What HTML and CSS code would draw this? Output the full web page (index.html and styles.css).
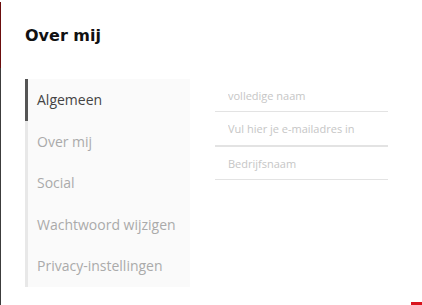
FILE: index.html
```html
<!DOCTYPE html>
<html lang="nl">
<head>
  <meta charset="UTF-8">
  <meta name="viewport" content="width=device-width, initial-scale=1.0">
  <title>Over mij</title>
  <link rel="stylesheet" href="styles.css">
</head>
<body>
  <div class="edge"></div>
  <div class="modal">
    <h1>Over mij</h1>
    <div class="content">
      <ul class="tabs">
        <li class="active">Algemeen</li>
        <li>Over mij</li>
        <li>Social</li>
        <li>Wachtwoord wijzigen</li>
        <li>Privacy-instellingen</li>
      </ul>
      <form class="fields">
        <input type="text" placeholder="volledige naam">
        <input type="email" class="focus" placeholder="Vul hier je e-mailadres in">
        <input type="text" placeholder="Bedrijfsnaam">
      </form>
    </div>
  </div>
  <div class="peek"></div>
</body>
</html>
```

FILE: styles.css
```css
html, body {
  height: 100%;
}
body {
  margin: 0;
  display: flex;
  background-color: #fff;
  font-family: "Open Sans", sans-serif;
  overflow: hidden;
}
.edge {
  width: 1px;
  flex: none;
  background: linear-gradient(to bottom, #fff 0, #fff 2px, #6b0d0d 2px, #6b0d0d 68px, #3c3c3c 68px);
}
.modal {
  flex: 1;
  padding: 0 24px;
}
h1 {
  margin: 26px 0 0;
  height: 53px;
  font-family: "DejaVu Sans", sans-serif;
  font-size: 16px;
  font-weight: bold;
  line-height: 19px;
  color: #111;
}
.content {
  display: flex;
  gap: 25px;
}
.tabs {
  list-style: none;
  margin: 0;
  padding: 0;
  width: 165px;
  background-color: #fafafa;
}
.tabs li {
  height: 41.6px;
  line-height: 41.6px;
  padding-left: 9px;
  border-left: 3px solid #e8e8e8;
  font-size: 14px;
  color: #aaa;
}
.tabs li.active {
  border-left-color: #555;
  color: #444;
}
.fields {
  width: 173px;
  display: flex;
  flex-direction: column;
}
.fields input {
  display: block;
  box-sizing: border-box;
  width: 100%;
  height: 33px;
  margin: 0;
  padding: 0 0 0 13px;
  border: none;
  border-bottom: 1px solid #e3e3e3;
  background: transparent;
  font-family: "Open Sans", sans-serif;
  font-size: 11px;
  outline: none;
}
.fields input.focus {
  height: 35px;
  border-bottom: 2px solid #e3e3e3;
}
.fields input::placeholder {
  color: #c6c6c6;
}
.peek {
  position: absolute;
  right: 0;
  bottom: 0;
  width: 11px;
  height: 3px;
  background-color: #d9141e;
}
```
